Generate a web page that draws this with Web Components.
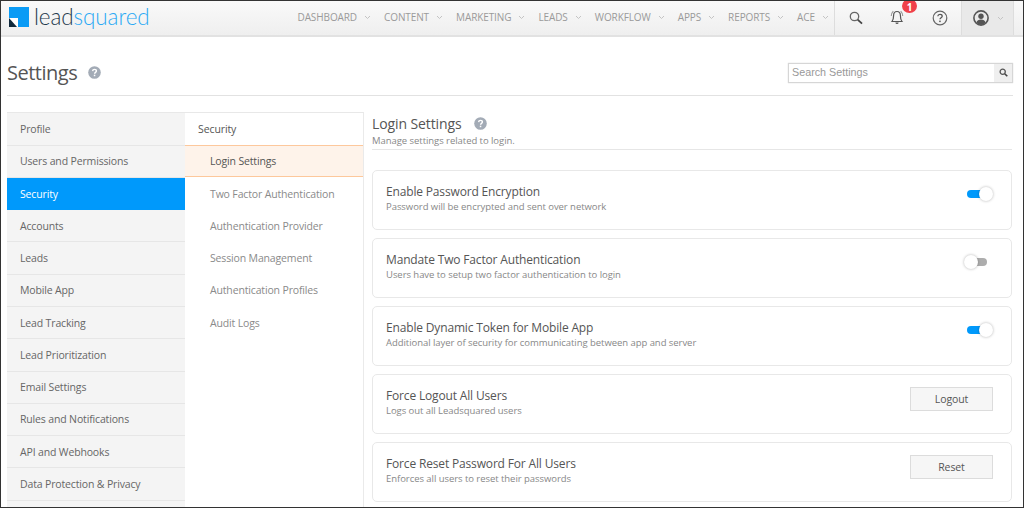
<!DOCTYPE html>
<html><head><meta charset="utf-8">
<style>
html,body{margin:0;padding:0;height:508px;overflow:hidden;background:#fff}
body{font-family:"Open Sans","Noto Sans",sans-serif;color:#555}
</style></head><body>
<ls-app></ls-app>
<script>
const def=(name,css,html)=>{
  const t=document.createElement('template');t.innerHTML=`<style>${css}</style>${html}`;
  customElements.define(name,class extends HTMLElement{
    constructor(){super();this.attachShadow({mode:'open'}).appendChild(t.content.cloneNode(true));}
  });
};
const CHEV='<svg width="7" height="5" viewBox="0 0 7 5"><path d="M1 1l2.5 2.5L6 1" fill="none" stroke="#c4c4c4" stroke-width="1"/></svg>';

def('ls-help',`:host{display:inline-flex}`,`<svg width="13" height="13" viewBox="0 0 13 13"><circle cx="6.5" cy="6.5" r="6.3" fill="#a3abb6"/><path d="M4.6 5.1c.1-1.1.9-1.7 1.9-1.7s1.9.6 1.9 1.6c0 1.3-1.8 1.4-1.8 2.7" fill="none" stroke="#fff" stroke-width="1.4"/><rect x="5.8" y="8.7" width="1.5" height="1.5" fill="#fff"/></svg>`);

def('ls-nav-item',`:host{display:flex;align-items:center;gap:7px;margin-right:13px;font-size:10px;color:#9a9a9a;white-space:nowrap;letter-spacing:-.1px}`,`<slot></slot>${CHEV}`);

def('ls-logo',`:host{display:flex;align-items:center;gap:5px;margin-left:8px}
svg{margin-top:-2px}
.t{font:300 22.5px/1 Lato,sans-serif;letter-spacing:-.1px;color:#1f3a4d;white-space:nowrap;margin-top:-1px}.t b{font-weight:300;color:#2aa9f4}`,
`<svg width="20" height="20" viewBox="0 0 20 20"><rect width="20" height="20" fill="#0a9bf5"/><rect y="11" width="9" height="9" fill="#fff"/><path d="M0 11l8 9H0z" fill="#10293c"/></svg><span class="t">lead<b>squared</b></span>`);

def('ls-topbar',`:host{display:flex;height:36px;box-sizing:border-box;background:linear-gradient(#f9f9f9,#efefef);border-bottom:2px solid #e2e2e2;align-items:stretch}
.sp{flex:1}.nav{display:flex;align-items:center;margin-top:-2px}
ls-nav-item:last-child{margin-right:5px}
.ic{display:flex;align-items:center;border-left:1px solid #ddd;position:relative}
.a{width:126px;padding:0}.a svg{position:absolute}
.badge{position:absolute;left:67px;top:-2px;width:15px;height:14px;box-sizing:border-box;padding-top:3px;border-radius:50%;background:#f0404a;color:#fff;font:700 10px/10px "Open Sans",sans-serif;text-align:center}
.u{width:53px;background:#e9e9e9;border-left:1px solid #ddd;border-right:1px solid #ddd;display:flex;align-items:center;gap:8px;padding-left:11px;box-sizing:border-box;margin-right:9px}`,
`<ls-logo></ls-logo><div class="sp"></div><div class="nav">
<ls-nav-item>DASHBOARD</ls-nav-item><ls-nav-item>CONTENT</ls-nav-item><ls-nav-item>MARKETING</ls-nav-item><ls-nav-item>LEADS</ls-nav-item><ls-nav-item>WORKFLOW</ls-nav-item><ls-nav-item>APPS</ls-nav-item><ls-nav-item>REPORTS</ls-nav-item><ls-nav-item>ACE</ls-nav-item></div>
<div class="ic a">
<svg style="left:14px;top:10px" width="14" height="14" viewBox="0 0 14 14"><circle cx="5.5" cy="5.5" r="4.2" fill="none" stroke="#666" stroke-width="1.3"/><path d="M8.7 8.7l4.3 4" stroke="#444" stroke-width="1.8"/></svg>
<svg style="left:54px;top:8px" width="16" height="17" viewBox="0 0 16 17"><path d="M8 2.500c-2.400 0-3.400 1.800-3.400 4 0 3-.4 4.500-1.600 6h10c-1.200-1.500-1.600-3-1.600-6 0-2.200-1-4-3.400-4z" fill="none" stroke="#555" stroke-width="1.200"/><path d="M6.400 13.500a1.600 1.600 0 0 0 3.200 0z" fill="#555"/><path d="M2.300 7c0-1.800.7-3.500 2-4.800M13.700 7c0-1.800-.7-3.500-2-4.800" fill="none" stroke="#999" stroke-width="1.200"/></svg>
<span class="badge">1</span>
<svg style="left:97px;top:9px" width="16" height="16" viewBox="0 0 16 16"><circle cx="8" cy="8" r="6.800" fill="none" stroke="#666" stroke-width="1.200"/><path d="M5.800 6.300c.1-1.300 1-1.900 2.200-1.900s2.200.7 2.200 1.800c0 1.500-2.200 1.600-2.200 3.100" fill="none" stroke="#555" stroke-width="1.300"/><rect x="7.200" y="10.600" width="1.500" height="1.500" fill="#555"/></svg>
</div>
<div class="u"><svg width="16" height="16" viewBox="0 0 16 16"><circle cx="8" cy="8" r="7.100" fill="none" stroke="#555" stroke-width="1.600"/><circle cx="8" cy="6.200" r="2.700" fill="#555"/><path d="M3.300 12.800c.6-2.300 2.500-3.300 4.700-3.300s4.100 1 4.700 3.300A7 7 0 0 1 8 15a7 7 0 0 1-4.700-2.200z" fill="#555"/></svg>${CHEV}</div>`);

def('ls-page-head',`:host{display:flex;align-items:center;height:59px;box-sizing:border-box;border-bottom:1px solid #e2e2e2;padding-top:13px}
h1{margin:0 11px 0 0;font:400 20px/26px "Open Sans",sans-serif;letter-spacing:-.5px;color:#555}
.sp{flex:1}
.s{display:flex;width:225px;height:20px;box-sizing:border-box;border:1px solid #d6d6d6;background:#fff;box-shadow:0 0 1px #ccc}
.s span{flex:1;font:400 10.750px/17px "Liberation Sans",sans-serif;color:#999;padding-left:3px}
.b{width:18px;background:#efefef;display:flex;align-items:center;justify-content:center}`,
`<h1>Settings</h1><ls-help></ls-help><div class="sp"></div><div class="s"><span>Search Settings</span><div class="b"><svg width="9" height="9" viewBox="0 0 9 9"><circle cx="3.700" cy="3.700" r="2.600" fill="none" stroke="#555" stroke-width="1.300"/><path d="M5.700 5.700l2.600 2.600" stroke="#444" stroke-width="1.600"/></svg></div></div>`);

def('ls-menu-item',`:host{display:flex;align-items:center;flex:none;height:32.270px;box-sizing:border-box;padding-left:13px;background:#f4f4f4;border-bottom:1px solid #e6e6e6;box-shadow:0 1px 0 #eee;font-size:10.500px;color:#666;white-space:nowrap;letter-spacing:-.15px}
:host([active]){background:#0099fb;color:#fff;box-shadow:none;border-bottom-color:#0099fb}`,`<slot></slot>`);

def('ls-side-menu',`:host{display:flex;flex-direction:column;width:178px;flex:none;background:#f4f4f4;border-top:1px solid #e8e8e8;padding-top:.4px;box-sizing:border-box;overflow:hidden}`,`<slot></slot>`);

def('ls-sub-head',`:host{display:flex;align-items:center;height:32.200px;flex:none;padding-left:13px;font-size:10.500px;color:#555;letter-spacing:-.1px}`,`<slot></slot>`);
def('ls-sub-item',`:host{display:flex;align-items:center;flex:none;height:32.270px;box-sizing:border-box;padding-left:25px;font-size:10.500px;color:#8a8a8a;white-space:nowrap;letter-spacing:-.15px}
:host([active]){background:#fef3ea;color:#555;border-top:1px solid #fdc89c;border-bottom:1px solid #fdc89c}`,`<slot></slot>`);
def('ls-sub-menu',`:host{display:flex;flex-direction:column;width:179px;flex:none;box-sizing:border-box;border-right:1px solid #eaeaea;border-top:1px solid #e8e8e8}`,`<slot></slot>`);

def('ls-toggle',`:host{display:block;position:relative;width:29px;height:16px;margin-top:-12px;margin-right:16px}
.t{position:absolute;left:1px;top:4px;width:22px;height:8px;border-radius:4px;background:#0099fb}
.k{position:absolute;left:12.500px;top:1px;width:14px;height:14px;border-radius:50%;background:#fff;box-shadow:0 0 3px rgba(0,0,0,.3)}
:host([off]) .t{background:#adadad;width:20px}
:host([off]) .k{left:-2.500px}`,`<div class="t"></div><div class="k"></div>`);

def('ls-button',`:host{display:flex;align-items:center;justify-content:center;width:83px;height:24px;box-sizing:border-box;background:#f6f6f6;border:1px solid #dcdcdc;border-bottom-width:1.500px;font-size:10.500px;color:#555;letter-spacing:-.1px;margin-top:-11px;margin-right:18px}`,`<slot></slot>`);

def('ls-card',`:host{display:flex;align-items:center;height:60px;box-sizing:border-box;border:1px solid #e8e8e8;border-radius:5px;padding-left:13px;background:#fff}
.m{flex:1;min-width:0}
.t{font-size:12px;line-height:16px;color:#555;letter-spacing:-.16px;margin-top:-3px}.d{font-size:9.500px;line-height:13px;color:#888;letter-spacing:-.05px}`,
`<div class="m"><div class="t"><slot name="title"></slot></div><div class="d"><slot name="desc"></slot></div></div><slot></slot>`);

def('ls-content',`:host{display:flex;flex-direction:column;flex:1;min-width:0;margin:0 1px 0 8px;gap:8px}
.h{height:38px;box-sizing:border-box;border-bottom:1px solid #e6e6e6;margin-bottom:12px;padding-top:2px}
.l{display:flex;align-items:center;gap:12px;font-size:14px;line-height:19px;font-weight:500;color:#555;letter-spacing:-.1px}
.s{font-size:9.500px;line-height:13px;color:#888;letter-spacing:-.05px;margin-top:1px}`,
`<div class="h"><div class="l">Login Settings <ls-help></ls-help></div><div class="s">Manage settings related to login.</div></div><slot></slot>`);

def('ls-app',`:host{display:flex;flex-direction:column;height:508px;box-sizing:border-box;border:1px solid #333;overflow:hidden;background:#fff}
.b{padding:0 10px 0 6px;display:flex;flex-direction:column;flex:1;min-height:0}
.c{display:flex;flex:1;min-height:0;margin-top:16px}`,
`<ls-topbar></ls-topbar><div class="b"><ls-page-head></ls-page-head><div class="c">
<ls-side-menu>${['Profile','Users and Permissions','Security','Accounts','Leads','Mobile App','Lead Tracking','Lead Prioritization','Email Settings','Rules and Notifications','API and Webhooks','Data Protection &amp; Privacy',''].map(x=>`<ls-menu-item${x==='Security'?' active':''}>${x}</ls-menu-item>`).join('')}</ls-side-menu>
<ls-sub-menu><ls-sub-head>Security</ls-sub-head>${['Login Settings','Two Factor Authentication','Authentication Provider','Session Management','Authentication Profiles','Audit Logs'].map((x,i)=>`<ls-sub-item${i?'':' active'}>${x}</ls-sub-item>`).join('')}</ls-sub-menu>
<ls-content>
<ls-card><span slot="title">Enable Password Encryption</span><span slot="desc">Password will be encrypted and sent over network</span><ls-toggle></ls-toggle></ls-card>
<ls-card><span slot="title">Mandate Two Factor Authentication</span><span slot="desc">Users have to setup two factor authentication to login</span><ls-toggle off></ls-toggle></ls-card>
<ls-card><span slot="title">Enable Dynamic Token for Mobile App</span><span slot="desc">Additional layer of security for communicating between app and server</span><ls-toggle></ls-toggle></ls-card>
<ls-card><span slot="title">Force Logout All Users</span><span slot="desc">Logs out all Leadsquared users</span><ls-button>Logout</ls-button></ls-card>
<ls-card><span slot="title">Force Reset Password For All Users</span><span slot="desc">Enforces all users to reset their passwords</span><ls-button>Reset</ls-button></ls-card>
</ls-content></div></div>`);
</script></body></html>
